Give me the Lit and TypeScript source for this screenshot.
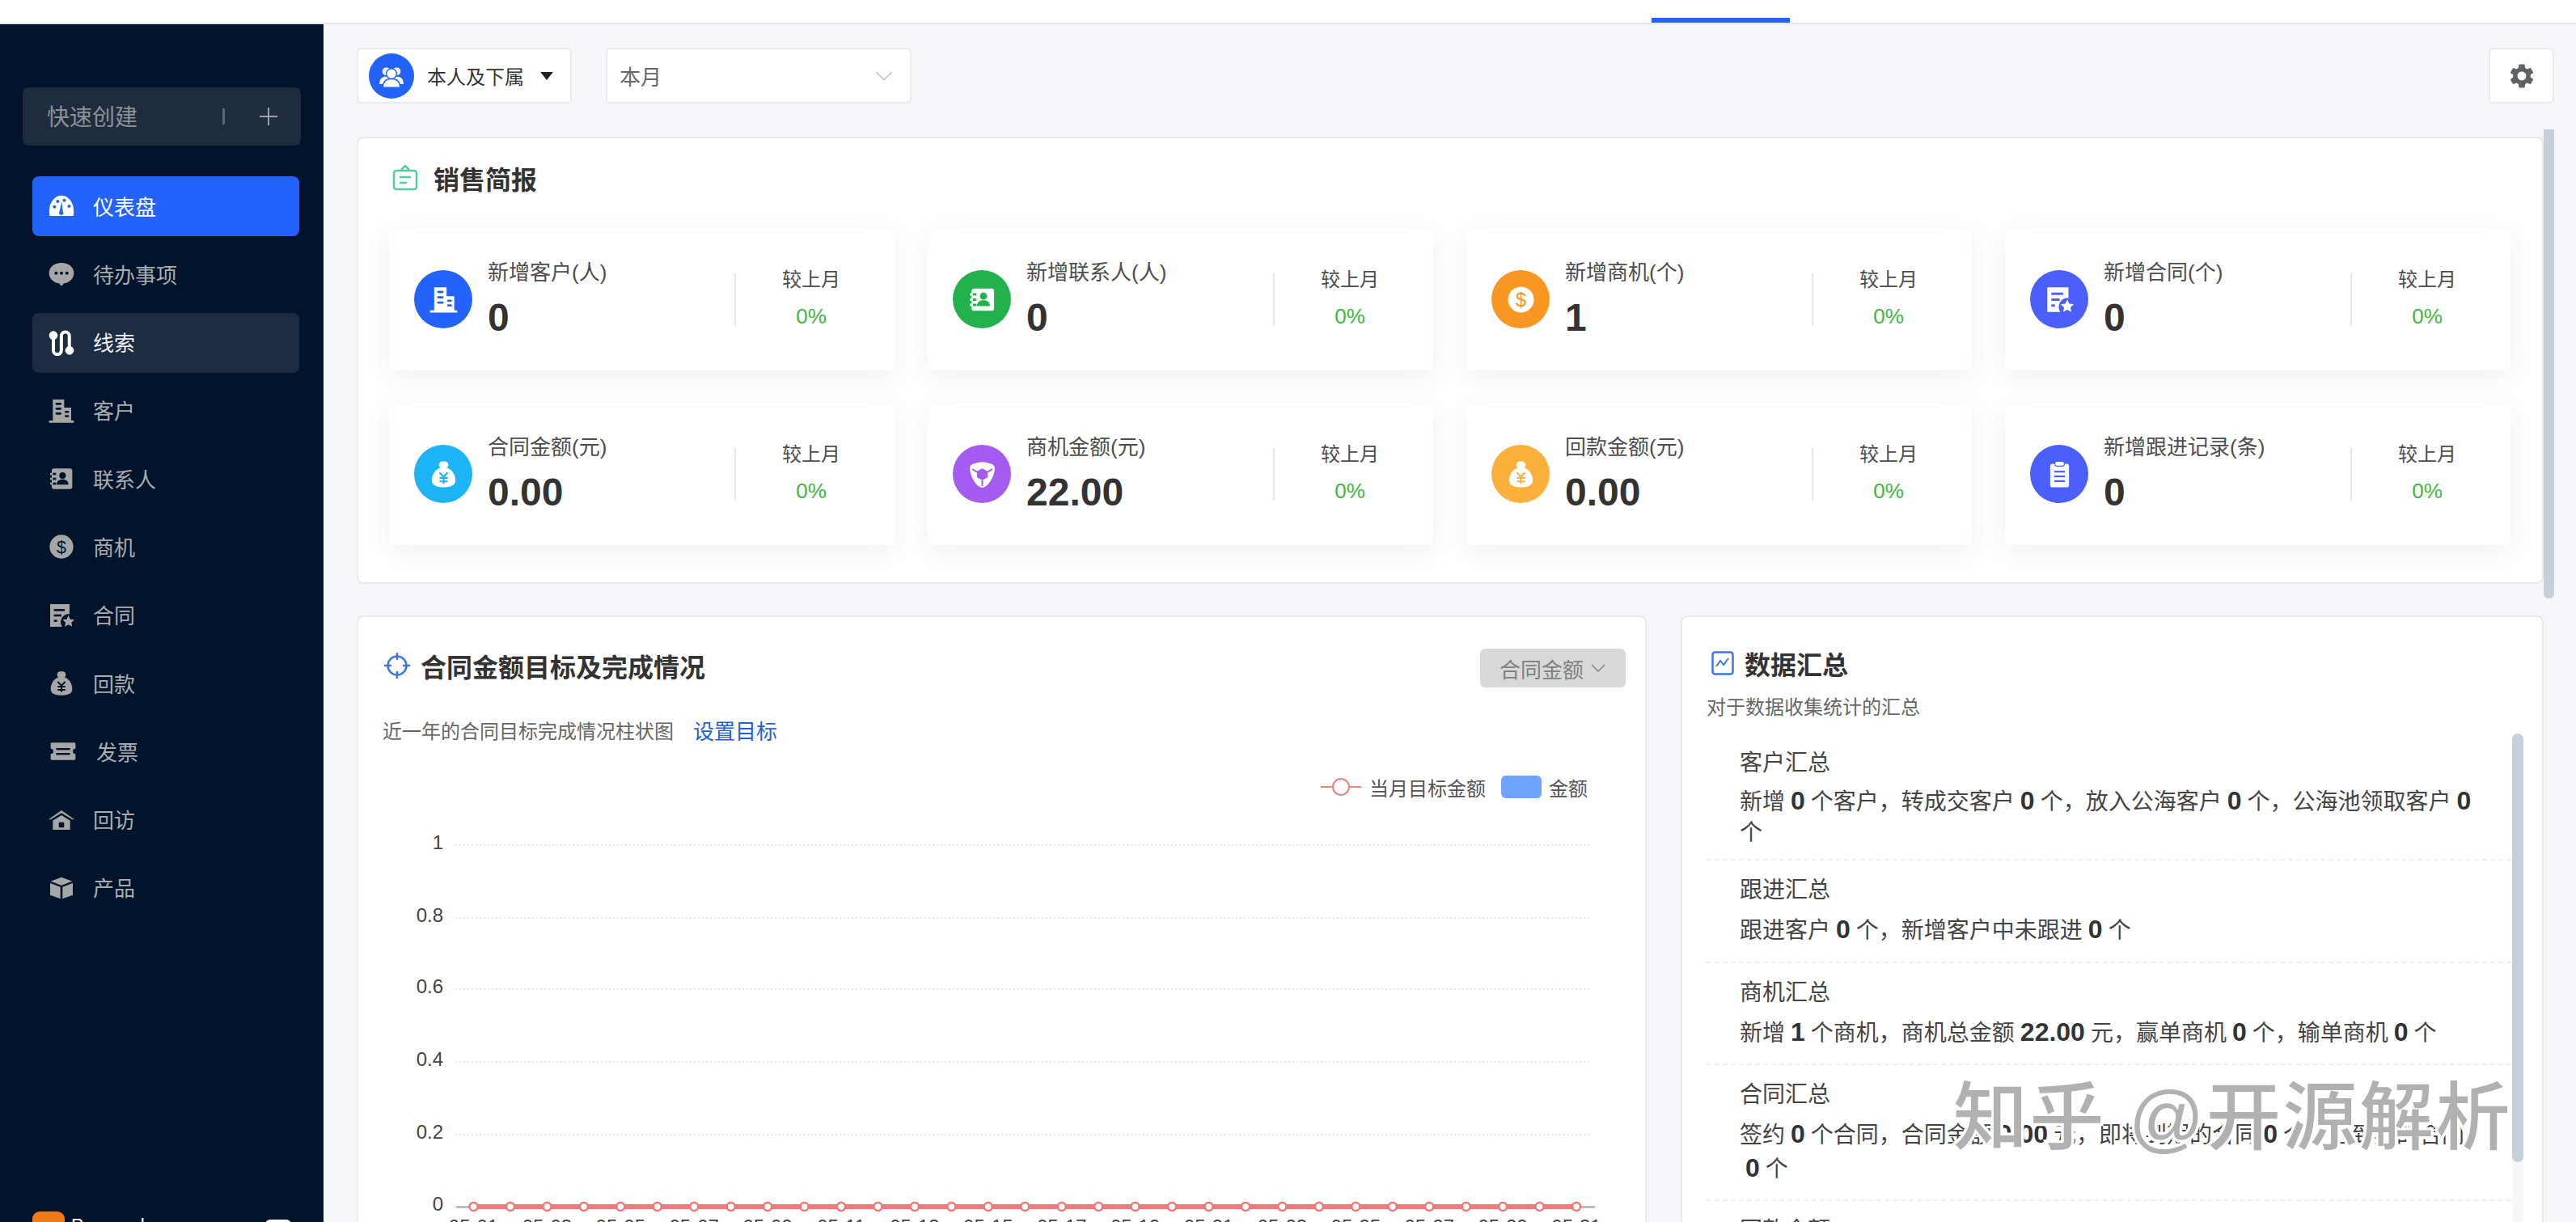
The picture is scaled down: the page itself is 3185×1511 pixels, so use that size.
import { LitElement, html, css, svg } from "lit";

type Draw = (fg: string, hole: string) => unknown;

// all glyphs share a 24x24 box; "hole" is whatever colour sits behind the icon
const glyphs: Record<string, Draw> = {
	gauge: (fg, hole) => svg`
		<path fill=${fg} d="M1 21C-1 10 5 2 12 2s13 8 11 19z"/>
		<circle cx="5.5" cy="12.5" r="1.5" fill=${hole}/><circle cx="8.5" cy="7.5" r="1.5" fill=${hole}/>
		<circle cx="14.5" cy="6.5" r="1.5" fill=${hole}/><circle cx="19" cy="12" r="1.5" fill=${hole}/>
		<path fill=${hole} d="M12.2 7.5l1 9.2a2 2 0 1 1-3 .2z"/>`,
	chat: (fg, hole) => svg`
		<path fill=${fg} d="M12 1.5c6.6 0 11.5 4 11.5 9.5s-4.8 9-9.2 9.4L12 23l-2.3-2.6C5.3 20 .5 16.5.5 11S5.400 1.500 12 1.500z"/>
		<circle cx="7" cy="11" r="1.500" fill=${hole}/><circle cx="12" cy="11" r="1.500" fill=${hole}/><circle cx="17" cy="11" r="1.500" fill=${hole}/>`,
	lead: (fg) => svg`
		<path fill="none" stroke=${fg} stroke-width="3" d="M4.500 6v13a3.700 3.700 0 0 0 7.400 0V5.500a3.700 3.700 0 0 1 7.400 0V18"/>
		<circle cx="4.500" cy="5" r="4" fill=${fg}/><circle cx="19.500" cy="19" r="4" fill=${fg}/>`,
	building: (fg, hole) => svg`
		<path fill=${fg} d="M4 1.500h10.500V9H21v12h2.500v2H.5v-2H4z"/>
		<rect x="6.500" y="4.500" width="5.500" height="2" rx="1" fill=${hole}/><rect x="6.500" y="9" width="5.500" height="2" rx="1" fill=${hole}/>
		<rect x="6.500" y="13.500" width="5.500" height="2" rx="1" fill=${hole}/>
		<rect x="15" y="12" width="4" height="1.800" rx=".9" fill=${hole}/><rect x="15" y="16" width="4" height="1.800" rx=".9" fill=${hole}/>`,
	contact: (fg, hole) => svg`
		<path fill=${fg} d="M5 2.500h15a2 2 0 0 1 2 2v15a2 2 0 0 1-2 2H5a2 2 0 0 1-2-2v-2H1.500v-2H3v-2.500H1.500v-2H3V8.500H1.500v-2H3V4.500a2 2 0 0 1 2-2z"/>
		<circle cx="13" cy="9" r="3" fill=${hole}/><path fill=${hole} d="M7.500 17.500c0-3.500 2.500-5 5.500-5s5.500 1.500 5.500 5z"/>
		<rect x="4" y="6.500" width="3" height="2" fill=${hole}/><rect x="4" y="11" width="3" height="2" fill=${hole}/><rect x="4" y="15.500" width="3" height="2" fill=${hole}/>`,
	coin: (fg, hole) => svg`
		<circle cx="12" cy="12" r="11" fill=${fg}/>
		<text x="12" y="18" text-anchor="middle" font-size="16" font-family="Liberation Sans" fill=${hole}>$</text>`,
	contract: (fg, hole) => svg`
		<path fill=${fg} d="M1.500 1.500h18v9.200a7.500 7.500 0 0 0-6.800 11.800H1.500z"/>
		<rect x="5" y="6" width="10" height="2" fill=${hole}/><rect x="5" y="11" width="7" height="2" fill=${hole}/><rect x="5" y="16" width="3" height="2" fill=${hole}/>
		<path fill=${fg} d="M18.500 12l1.700 3.500 3.800.5-2.800 2.600.7 3.800-3.400-1.900-3.400 1.900.7-3.800L13 16l3.800-.5z"/>`,
	bag: (fg, hole) => svg`
		<rect x="8" y="1" width="8" height="6" rx="3" fill=${fg}/>
		<path fill=${fg} d="M12 6c6 0 10 5.500 10 11 0 4.500-4 6-10 6s-10-1.500-10-6C2 11.500 6 6 12 6z"/>
		<path fill="none" stroke=${hole} stroke-width="1.500" d="M8.500 10.500L12 14l3.500-3.500M12 14v6M8.500 15h7M8.500 18h7"/>`,
	ticket: (fg, hole) => svg`
		<path fill=${fg} d="M1.500 4h21a1 1 0 0 1 1 1v4.500a2.500 2.500 0 0 0 0 5V19a1 1 0 0 1-1 1h-21a1 1 0 0 1-1-1v-4.500a2.500 2.500 0 0 0 0-5V5a1 1 0 0 1 1-1z"/>
		<rect x="5.500" y="9" width="13" height="1.800" fill=${hole}/><rect x="5.500" y="13.500" width="13" height="1.800" fill=${hole}/>`,
	home: (fg, hole) => svg`
		<path fill=${fg} d="M12 3L0 11.500h2L12 5.500l10 6h2z"/>
		<path fill=${fg} d="M12 7.500L20 12.500V21H4v-8.500z"/>
		<rect x="9.500" y="14" width="5" height="5" rx="1" fill=${hole}/>`,
	cube: (fg) => svg`
		<path fill=${fg} d="M12 2l10 3.800L12 9.500 2 5.800z"/><path fill=${fg} d="M1.500 7.500l9.500 3.600V22L1.500 18.500z"/><path fill=${fg} d="M22.500 7.500L13 11.100V22l9.500-3.500z"/>`,
	clipboard: (fg, hole) => svg`
		<rect x="4" y="3" width="16" height="20" rx="2" fill=${fg}/><rect x="8" y="1" width="8" height="4" rx="1.500" fill=${fg} stroke=${hole} stroke-width=".8"/>
		<rect x="7.500" y="9" width="9" height="1.500" fill=${hole}/><rect x="7.500" y="13" width="9" height="1.500" fill=${hole}/><rect x="7.500" y="17" width="9" height="1.500" fill=${hole}/>`,
	link: (fg, hole) => svg`
		<path fill=${fg} d="M12 1.500c3 0 5 1 7.500 1.500 2.500.5 3.500 3 3 5.500-.8 5-4 11.500-8 14-1.500 1-3.500 1-5 0-4-2.500-7.200-9-8-14C1 6 2 3.500 4.500 3 7 2.500 9 1.500 12 1.500z"/>
		<path fill=${hole} d="M12 7l4.500 2.500v5L12 17l-4.500-2.500v-5z"/>
		<path fill="none" stroke=${hole} stroke-width="1.300" d="M3.500 7.500l4 2.500M20.500 7.500l-4 2.500M12 22v-5"/>`,
	team: (fg, hole) => svg`
		<circle cx="7.500" cy="8" r="3.500" fill=${fg}/><circle cx="16.500" cy="8" r="3.500" fill=${fg}/>
		<path fill=${fg} d="M1.500 19c0-5 2.500-6.500 6-6.500s6 1.500 6 6.500zM10.500 19c0-5 2.500-6.500 6-6.500s6 1.500 6 6.500z"/>
		<circle cx="12" cy="10" r="4.500" fill=${fg} stroke=${hole} stroke-width="1"/>
		<path fill=${fg} stroke=${hole} stroke-width="1" d="M4.500 22c0-5.500 3.500-7.500 7.500-7.500s7.500 2 7.500 7.500z"/>`
};

const icon = (name: string, fg: string, hole: string) =>
	html`<svg viewBox="0 0 24 24">${glyphs[name](fg, hole)}</svg>`;

const NAV = [
	{ name: "gauge", label: "仪表盘", state: "active" },
	{ name: "chat", label: "待办事项" },
	{ name: "lead", label: "线索", state: "hover" },
	{ name: "building", label: "客户" },
	{ name: "contact", label: "联系人" },
	{ name: "coin", label: "商机" },
	{ name: "contract", label: "合同" },
	{ name: "bag", label: "回款" },
	{ name: "ticket", label: "发票", state: "wide" },
	{ name: "home", label: "回访" },
	{ name: "cube", label: "产品" }
];

const METRICS = [
	{ name: "building", color: "#2362fb", label: "新增客户(人)", value: "0" },
	{ name: "contact", color: "#22b14c", label: "新增联系人(人)", value: "0" },
	{ name: "coin", color: "#fa9622", label: "新增商机(个)", value: "1" },
	{ name: "contract", color: "#4a5ffb", label: "新增合同(个)", value: "0" },
	{ name: "bag", color: "#1db4f5", label: "合同金额(元)", value: "0.00" },
	{ name: "link", color: "#a45cf0", label: "商机金额(元)", value: "22.00" },
	{ name: "bag", color: "#fbb03b", label: "回款金额(元)", value: "0.00" },
	{ name: "clipboard", color: "#4a5ffb", label: "新增跟进记录(条)", value: "0" }
];

// odd entries are the bold numbers
const SUMMARY = [
	{ title: "客户汇总", parts: ["新增", "0", "个客户，转成交客户", "0", "个，放入公海客户", "0", "个，公海池领取客户", "0", "个"] },
	{ title: "跟进汇总", parts: ["跟进客户", "0", "个，新增客户中未跟进", "0", "个"] },
	{ title: "商机汇总", parts: ["新增", "1", "个商机，商机总金额", "22.00", "元，赢单商机", "0", "个，输单商机", "0", "个"] },
	{ title: "合同汇总", parts: ["签约", "0", "个合同，合同金额", "0.00", "元，即将到期的合同", "0", "个，已到期的合同", "0", "个"] },
	{ title: "回款金额", parts: ["回款", "0.00", "元"] }
];

const GRID = [
	{ y: 1045, label: "1" },
	{ y: 1135, label: "0.8" },
	{ y: 1223, label: "0.6" },
	{ y: 1313, label: "0.4" },
	{ y: 1403, label: "0.2" }
];

const POINTS = Array.from({ length: 31 }, (_, i) => 585.5 + i * 45.45);

customElements.define("app-root", class extends LitElement {
	static styles = css`
		:host {
			display: block;
			position: relative;
			width: 3185px;
			height: 1511px;
			overflow: hidden;
			background: #f5f6f9;
			color: #333;
			font-family: "Liberation Sans", "Noto Sans CJK SC", sans-serif;
		}

		svg {
			display: block;
		}

		.topbar {
			display: flex;
			align-items: flex-end;
			box-sizing: border-box;
			height: 30px;
			padding-left: 2042px;
			background: #fff;
			border-bottom: 2px solid #e3e5e9;
		}

		.topbar i {
			width: 171px;
			height: 6px;
			background: #2362fb;
		}

		.body {
			display: flex;
			height: 1481px;
		}

		.side {
			flex: 0 0 400px;
			display: flex;
			flex-direction: column;
			background: #01142b;
		}

		.quick {
			display: flex;
			align-items: center;
			height: 72px;
			margin: 78px 28px 38px;
			padding-left: 30px;
			border-radius: 8px;
			background: #1e2c3e;
			color: #8b9199;
			font-size: 28px;
		}

		.quick span {
			margin-top: -2px;
		}

		.quick b {
			width: 3px;
			height: 20px;
			margin-left: auto;
			background: #5b6673;
		}

		.quick svg {
			width: 24px;
			height: 24px;
			margin: 0 28px 0 42px;
		}

		nav {
			display: flex;
			flex-direction: column;
			gap: 10.3px;
			margin: 0 30px 0 40px;
		}

		.item {
			display: flex;
			align-items: center;
			gap: 23px;
			height: 74px;
			padding-left: 20px;
			border-radius: 8px;
			color: #aaacb0;
			font-size: 26px;
		}

		.item span {
			margin-top: -2px;
		}

		.item svg {
			width: 32px;
			height: 32px;
			flex: none;
		}

		.item.wide svg {
			width: 36px;
		}

		.item.active {
			background: #2362fb;
			color: #fff;
		}

		.item.hover {
			background: #1d2c40;
			color: #eceef0;
		}

		.foot {
			display: flex;
			align-items: flex-start;
			margin: auto 40px 0;
			height: 13px;
			overflow: hidden;
			color: #fff;
			font-size: 23px;
		}

		.foot u {
			width: 40px;
			height: 40px;
			margin-right: 8px;
			border-radius: 9px;
			background: #f07a16;
		}

		.foot span {
			margin-top: 5px;
		}

		.foot em {
			width: 32px;
			height: 30px;
			margin: 10px 0 0 auto;
			border-radius: 6px;
			background: #fff;
		}

		main {
			flex: 1;
			min-width: 0;
			padding: 29px 40px 0 41px;
		}

		.tools {
			display: flex;
			gap: 42px;
			margin-right: -13px;
			height: 69px;
		}

		.box {
			display: flex;
			align-items: center;
			box-sizing: border-box;
			border: 2px solid #e9eaed;
			border-radius: 6px;
			background: #fff;
		}

		.owner {
			width: 266px;
			padding-left: 13px;
			font-size: 24px;
		}

		.owner .round {
			display: flex;
			align-items: center;
			justify-content: center;
			width: 56px;
			height: 56px;
			margin-right: 16px;
			border-radius: 50%;
			background: #2362fb;
		}

		.owner .round svg {
			width: 34px;
			height: 34px;
		}

		.owner i {
			margin-left: 20px;
			border-style: solid;
			border-width: 10px 8px 0;
			border-color: #222 transparent transparent;
		}

		.period {
			width: 378px;
			padding: 0 20px 0 15px;
			color: #666;
			font-size: 26px;
			justify-content: space-between;
		}

		.period svg {
			width: 24px;
			height: 14px;
		}

		.gear {
			justify-content: center;
			width: 81px;
			margin-left: auto;
		}

		.gear svg {
			width: 36px;
			height: 36px;
		}

		.panel {
			box-sizing: border-box;
			border: 2px solid #e9eaed;
			border-radius: 8px;
			background: #fff;
		}

		.sales {
			height: 553px;
			margin-top: 41px;
			padding: 0 38px;
		}

		.head {
			display: flex;
			align-items: center;
			font-weight: 700;
			font-size: 32px;
			color: #333;
		}

		.sales .head {
			gap: 19px;
			height: 44px;
			margin: 27px 0 0 4px;
		}

		.head svg {
			flex: none;
		}

		.cards {
			display: grid;
			grid-template-columns: repeat(4, 625px);
			grid-auto-rows: 176px;
			gap: 40px 41px;
			margin-top: 40px;
		}

		.card {
			display: flex;
			align-items: center;
			padding-left: 31px;
			border-radius: 8px;
			background: #fff;
			box-shadow: 0 8px 30px rgba(40, 50, 70, 0.07);
		}

		.dot {
			display: flex;
			align-items: center;
			justify-content: center;
			flex: none;
			width: 72px;
			height: 72px;
			margin-right: 19px;
			border-radius: 50%;
		}

		.dot svg {
			width: 35px;
			height: 35px;
		}

		.card .text {
			flex: 1;
			min-width: 0;
		}

		.card .label {
			height: 34px;
			line-height: 34px;
			font-size: 26px;
			color: #4d4d4d;
		}

		.card .value {
			height: 54px;
			margin-top: 12px;
			line-height: 54px;
			font-size: 48px;
			font-weight: 700;
			color: #333;
		}

		.diff {
			flex: 0 0 198px;
			box-sizing: border-box;
			height: 65px;
			padding: 0 10px 4px 0;
			border-left: 2px solid #e6e8eb;
			display: flex;
			flex-direction: column;
			justify-content: center;
			align-items: center;
			gap: 13px;
			font-size: 24px;
			color: #4d4d4d;
		}

		.diff b {
			font-weight: 400;
			font-size: 26px;
			color: #3cb83c;
			line-height: 32px;
		}

		.diff span {
			line-height: 32px;
		}

		.lower {
			display: grid;
			grid-template-columns: 1595px 1067px;
			gap: 42px;
			margin-top: 39px;
			height: 800px;
		}

		.target .top {
			display: flex;
			align-items: center;
			justify-content: space-between;
			height: 48px;
			margin: 36px 24px 0 32px;
		}

		.target .head {
			gap: 13px;
		}

		.pick {
			display: flex;
			align-items: center;
			justify-content: center;
			gap: 8px;
			width: 180px;
			height: 48px;
			margin-top: 6px;
			border-radius: 6px;
			background: #d9d9d9;
			color: #808080;
			font-size: 26px;
		}

		.pick svg {
			width: 20px;
			height: 12px;
		}

		.hint {
			display: flex;
			gap: 24px;
			align-items: center;
			margin: 38px 0 0 30px;
			height: 34px;
			font-size: 24px;
			color: #666;
		}

		.hint a {
			color: #2362d0;
			font-size: 26px;
		}

		.legend {
			display: flex;
			justify-content: flex-end;
			align-items: center;
			margin: 37px 71px 0 0;
			height: 34px;
			font-size: 24px;
			color: #555;
		}

		.legend svg {
			width: 50px;
			height: 24px;
			margin-right: 10px;
		}

		.legend i {
			width: 50px;
			height: 28px;
			margin: 0 9px 0 19px;
			border-radius: 6px;
			background: #6ea4ff;
		}

		.plot {
			margin-top: 55px;
		}

		.plot text {
			font-family: "Liberation Sans", sans-serif;
			font-size: 24px;
			fill: #444;
		}

		.data {
			position: relative;
			padding: 35px 0 0 30px;
		}

		.data .head {
			gap: 13px;
			height: 44px;
			margin-left: 6px;
		}

		.data .note {
			margin-top: 16px;
			height: 34px;
			line-height: 34px;
			font-size: 24px;
			color: #666;
		}

		.list {
			width: 995px;
			margin-top: 9px;
		}

		.row {
			box-sizing: border-box;
			padding: 17px 0 18px 41px;
			border-bottom: 2px dashed #eceef0;
		}

		.row:first-child {
			padding: 23px 0 14px 41px;
		}

		.row:first-child h4 {
			margin-bottom: 6px;
		}

		.row h4 {
			margin: 0 0 8px;
			font-weight: 400;
			font-size: 28px;
			line-height: 40px;
			color: #444;
		}

		.row p {
			width: 916px;
			margin: 0;
			font-size: 28px;
			line-height: 1.3;
			color: #444;
		}

		.row b {
			margin: 0 7px;
			font-size: 32px;
			color: #333;
		}

		.track {
			position: absolute;
			top: 144px;
			left: 1026px;
			width: 14px;
			height: 680px;
			border-radius: 7px;
			background: #f6f7f8;
		}

		.track i {
			display: block;
			height: 530px;
			border-radius: 7px;
			background: #c5d0db;
		}

		.scroll {
			position: absolute;
			top: 160px;
			left: 3145px;
			width: 13px;
			height: 580px;
			border-radius: 0 0 6px 6px;
			background: #c5d0db;
		}

		.mark {
			position: absolute;
			top: 1330px;
			left: 2415px;
			line-height: 104px;
			font-size: 92px;
			font-weight: 500;
			letter-spacing: 2.5px;
			white-space: pre;
			color: #b1b1b1;
			-webkit-text-stroke: 7px #fff;
			paint-order: stroke fill;
		}
	`;

	renderNav() {
		return NAV.map((n) => {
			const fg = n.state === "active" || n.state === "hover" ? "#fff" : "#a6a6a6";
			const hole = n.state === "active" ? "#2362fb" : "#01142b";
			return html`
				<div class="item ${n.state ?? ""}">${icon(n.name, fg, hole)}<span>${n.label}</span></div>
			`;
		});
	}

	renderCard(m: (typeof METRICS)[number]) {
		return html`
			<div class="card">
				<div class="dot" style="background:${m.color}">${icon(m.name, "#fff", m.color)}</div>
				<div class="text">
					<div class="label">${m.label}</div>
					<div class="value">${m.value}</div>
				</div>
				<div class="diff"><span>较上月</span><b>0%</b></div>
			</div>
		`;
	}

	renderPlot() {
		return html`
			<svg class="plot" width="1591" height="480" viewBox="443 1045 1591 480" style="overflow:visible">
				${GRID.map((g) => svg`
					<line x1="563" x2="1968" y1=${g.y} y2=${g.y} stroke="#e4e6e8" stroke-width="2" stroke-dasharray="2 3"/>
					<text x="548" y=${g.y + 5} text-anchor="end">${g.label}</text>
				`)}
				<text x="548" y="1497" text-anchor="end">0</text>
				<line x1="564" x2="1972" y1="1492.500" y2="1492.500" stroke="#bcbcbc" stroke-width="3"/>
				<line x1=${POINTS[0]} x2=${POINTS[30]} y1="1492" y2="1492" stroke="#f27a7a" stroke-width="6"/>
				${POINTS.map((x) => svg`<circle cx=${x} cy="1492" r="5" fill="#fff" stroke="#ee7777" stroke-width="2.500"/>`)}
				${POINTS.filter((_, i) => i % 2 === 0).map((x, i) => svg`
					<text x=${x} y="1525" text-anchor="middle">05-${String(i * 2 + 1).padStart(2, "0")}</text>
				`)}
			</svg>
		`;
	}

	render() {
		const down = html`<svg viewBox="0 0 20 12"><path d="M2 2l8 8 8-8" fill="none" stroke="currentColor" stroke-width="1.500"/></svg>`;
		return html`
			<div class="topbar"><i></i></div>
			<div class="body">
				<aside class="side">
					<div class="quick">
						<span>快速创建</span>
						<b></b>
						<svg viewBox="0 0 24 24"><path d="M12 1v22M1 12h22" stroke="#9aa0a8" stroke-width="2"/></svg>
					</div>
					<nav>${this.renderNav()}</nav>
					<div class="foot"><u></u><span>Powered</span><em></em></div>
				</aside>
				<main>
					<div class="tools">
						<div class="box owner">
							<div class="round">${icon("team", "#fff", "#2362fb")}</div>
							<span>本人及下属</span>
							<i></i>
						</div>
						<div class="box period">
							<span>本月</span>
							<span style="color:#c4c7cc">${down}</span>
						</div>
						<div class="box gear">
							<svg viewBox="0 0 24 24"><path fill="#5f6368" d="M19.140 12.940c.04-.3.06-.61.06-.94 0-.32-.02-.64-.07-.94l2.030-1.580a.49.49 0 0 0 .12-.61l-1.920-3.320a.488.488 0 0 0-.59-.22l-2.390.96c-.5-.38-1.030-.7-1.620-.94l-.36-2.540a.484.484 0 0 0-.48-.41h-3.840c-.24 0-.43.17-.47.41l-.36 2.540c-.59.24-1.130.57-1.620.94l-2.390-.96c-.22-.08-.47 0-.59.22L2.740 8.870c-.12.21-.08.47.12.61l2.030 1.580c-.05.3-.09.63-.09.94s.02.64.07.94l-2.030 1.580a.49.49 0 0 0-.12.61l1.920 3.320c.12.22.37.29.59.22l2.390-.96c.5.38 1.030.7 1.620.94l.36 2.540c.05.24.24.41.48.41h3.840c.24 0 .44-.17.47-.41l.36-2.540c.59-.24 1.130-.56 1.620-.94l2.390.96c.22.08.47 0 .59-.22l1.920-3.320c.12-.22.07-.47-.12-.61l-2.010-1.580zM12 15.600c-1.980 0-3.600-1.620-3.600-3.600s1.620-3.600 3.600-3.600 3.600 1.620 3.600 3.600-1.620 3.600-3.600 3.600z"/></svg>
						</div>
					</div>

					<section class="panel sales">
						<div class="head">
							<svg width="32" height="32" viewBox="0 0 32 32" fill="none" stroke="#57c9a3" stroke-width="2.500">
								<rect x="2" y="7" width="28" height="23" rx="3"/>
								<path d="M11 6l5-5 5 5M9 15h14M9 22h9"/>
							</svg>
							<span>销售简报</span>
						</div>
						<div class="cards">${METRICS.map((m) => this.renderCard(m))}</div>
					</section>

					<div class="lower">
						<section class="panel target">
							<div class="top">
								<div class="head">
									<svg width="32" height="32" viewBox="0 0 32 32" fill="none" stroke="#3f76e0" stroke-width="2.500">
										<circle cx="16" cy="16" r="11.500"/>
										<path d="M16 0v9M16 23v9M0 16h9M23 16h9"/>
									</svg>
									<span>合同金额目标及完成情况</span>
								</div>
								<div class="pick"><span>合同金额</span>${down}</div>
							</div>
							<div class="hint"><span>近一年的合同目标完成情况柱状图</span><a>设置目标</a></div>
							<div class="legend">
								<svg viewBox="0 0 50 24">
									<path d="M0 12h50" stroke="#e8837f" stroke-width="2"/>
									<circle cx="25" cy="12" r="10" fill="#fff" stroke="#e8837f" stroke-width="2"/>
								</svg>
								<span>当月目标金额</span>
								<i></i>
								<span>金额</span>
							</div>
							${this.renderPlot()}
						</section>

						<section class="panel data">
							<div class="head">
								<svg width="28" height="30" viewBox="0 0 28 30" fill="none" stroke="#3f76e0">
									<rect x="1.500" y="1.500" width="25" height="27" rx="3" stroke-width="2.500"/>
									<path d="M6 19l5-7 4 5 6-8" stroke-width="2"/>
								</svg>
								<span>数据汇总</span>
							</div>
							<div class="note">对于数据收集统计的汇总</div>
							<div class="list">
								${SUMMARY.map((s) => html`
									<div class="row">
										<h4>${s.title}</h4>
										<p>${s.parts.map((p, i) => (i % 2 ? html`<b>${p}</b>` : p))}</p>
									</div>
								`)}
							</div>
							<div class="track"><i></i></div>
						</section>
					</div>
				</main>
			</div>
			<div class="scroll"></div>
			<div class="mark">知乎 @开源解析</div>
		`;
	}
});
